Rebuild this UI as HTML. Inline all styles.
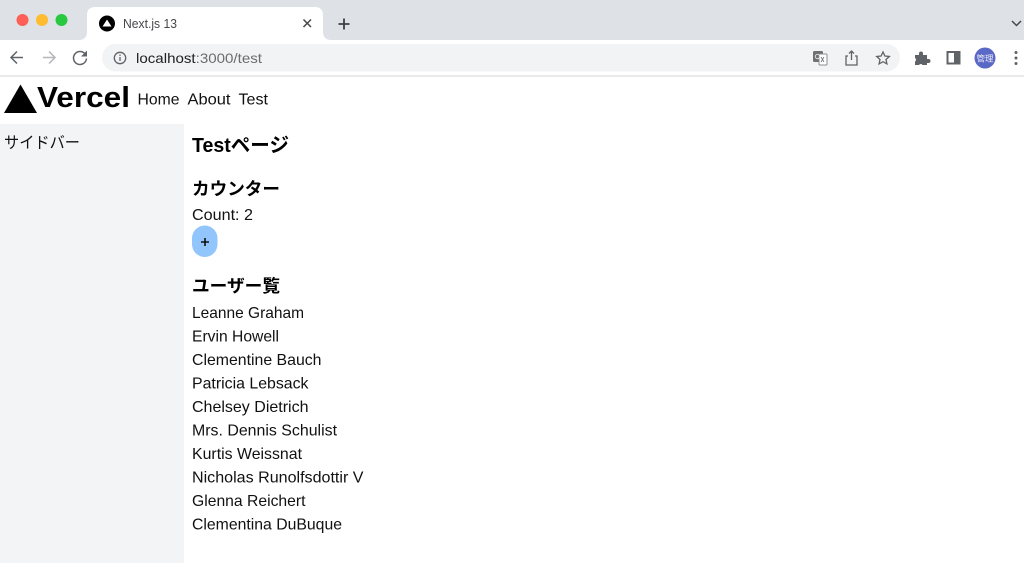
<!DOCTYPE html>
<html lang="ja">
<head>
<meta charset="utf-8">
<title>Next.js 13</title>
<style>
html,body{margin:0;padding:0;background:#fff;}
body{width:1024px;height:563px;overflow:hidden;}
svg{display:block;}
text{font-family:"Liberation Sans","Noto Sans CJK JP",sans-serif;fill:#111;}
.b{font-size:16px;}
.h{font-weight:700;fill:#000;}
</style>
</head>
<body>
<svg width="1024" height="563" viewBox="0 0 1024 563" xmlns="http://www.w3.org/2000/svg">
<!-- browser chrome -->
<rect width="1024" height="40" fill="#dee1e6"/>
<rect y="40" width="1024" height="36" fill="#fff"/>
<rect y="75" width="1024" height="2" fill="#e9eaec"/>
<circle cx="22.500" cy="20" r="6" fill="#fe5f57"/>
<circle cx="42" cy="20" r="6" fill="#febc2e"/>
<circle cx="61.500" cy="20" r="6" fill="#28c840"/>
<!-- tab -->
<path d="M79 40c5 0 8-3 8-8V15c0-5 3-8 8-8h220c5 0 8 3 8 8v17c0 5 3 8 8 8z" fill="#fff"/>
<circle cx="107" cy="23.500" r="8" fill="#000"/>
<path d="M107 19.500l4.500 7h-9z" fill="#fff"/>
<text x="123" y="28" font-size="13" style="fill:#45474a" textLength="54" lengthAdjust="spacingAndGlyphs">Next.js 13</text>
<path d="M303.500 19.500l7.500 7.500M311 19.500l-7.500 7.500" stroke="#45474a" stroke-width="1.500" fill="none"/>
<path d="M344 18.500v11M338.500 24h11" stroke="#3c4043" stroke-width="1.800" fill="none"/>
<path d="M1012 21l4.500 4.500 4.500-4.500" stroke="#45474a" stroke-width="1.500" fill="none"/>
<!-- nav icons -->
<path d="M23 57.500H11.500M17 51.500l-6 6 6 6" stroke="#5f6368" stroke-width="1.500" fill="none"/>
<path d="M43 57.500h12M49 51.500l6 6-6 6" stroke="#b4b6b9" stroke-width="1.500" fill="none"/>
<path d="M85.500 54.500a6.500 6.500 0 1 0 1 4" stroke="#5f6368" stroke-width="1.500" fill="none"/>
<path d="M87 50.500v6h-6z" fill="#5f6368"/>
<!-- omnibox -->
<rect x="102" y="44" width="798" height="27.500" rx="13.700" fill="#f1f3f4"/>
<circle cx="120" cy="58" r="5.700" fill="none" stroke="#5f6368" stroke-width="1.300"/>
<path d="M120 57v4M120 54.500v1.400" stroke="#5f6368" stroke-width="1.300"/>
<text x="136" y="63" font-size="14" textLength="126" lengthAdjust="spacingAndGlyphs"><tspan style="fill:#202124">localhost</tspan><tspan style="fill:#6a6d71">:3000/test</tspan></text>
<!-- right icons -->
<rect x="813" y="51" width="10" height="11" rx="1.500" fill="#6d7074"/>
<rect x="819" y="54" width="8" height="11" rx="1" fill="#fff" stroke="#8a8d91" stroke-width="1"/>
<path d="M821 57l3 5M824 57l-3 5" stroke="#6d7074" stroke-width=".8"/>
<circle cx="817.500" cy="56.500" r="2.200" fill="none" stroke="#e8e8e8" stroke-width=".9"/>
<path d="M848 56h-2v9h11v-9h-2M851.500 60v-9M849 53.500l2.500-2.500 2.500 2.500" stroke="#5f6368" stroke-width="1.300" fill="none"/>
<path d="M883 52l1.900 4 4.400.5-3.300 3 .9 4.400-3.900-2.200-3.900 2.200.9-4.400-3.300-3 4.400-.5z" stroke="#5f6368" stroke-width="1.300" fill="none"/>
<path d="M915 55h4v-1.500a2 2 0 0 1 4 0V55h4v4h1.500a2 2 0 0 1 0 4H927v2h-4.500a2 2 0 0 0-3.500 0H915v-3.500a2 2 0 0 0 0-3.500z" fill="#5f6368"/>
<rect x="947.500" y="52" width="12" height="11.500" fill="none" stroke="#5f6368" stroke-width="2"/>
<rect x="954" y="52" width="6" height="12" fill="#5f6368"/>
<circle cx="985" cy="58" r="10.500" fill="#5b69c6"/>
<text x="985" y="61.500" font-size="8.500" text-anchor="middle" style="fill:#e8eaf8">管理</text>
<circle cx="1016" cy="52.500" r="1.500" fill="#5f6368"/>
<circle cx="1016" cy="58" r="1.500" fill="#5f6368"/>
<circle cx="1016" cy="63.500" r="1.500" fill="#5f6368"/>

<!-- page -->
<path d="M20.500 84.500L37 113H4z" fill="#000"/>
<text x="37" y="107" font-size="28.500" style="font-weight:700;fill:#000" textLength="93" lengthAdjust="spacingAndGlyphs">Vercel</text>
<text class="b" x="137.500" y="104.500" textLength="42" lengthAdjust="spacingAndGlyphs">Home</text>
<text class="b" x="187.500" y="104.500" textLength="43" lengthAdjust="spacingAndGlyphs">About</text>
<text class="b" x="238.500" y="104.500" textLength="29.500" lengthAdjust="spacingAndGlyphs">Test</text>

<rect x="0" y="124" width="184" height="439" fill="#f3f4f6"/>
<text class="b" x="4" y="148" textLength="76" lengthAdjust="spacingAndGlyphs">サイドバー</text>

<text class="h" x="192" y="152" font-size="20" textLength="97" lengthAdjust="spacingAndGlyphs">Testページ</text>
<text class="h" x="192" y="195" font-size="17.500" textLength="88" lengthAdjust="spacingAndGlyphs">カウンター</text>
<text class="b" x="192" y="220" textLength="61" lengthAdjust="spacingAndGlyphs">Count: 2</text>
<rect x="192" y="225.500" width="25.500" height="31.500" rx="12.750" ry="12.750" fill="#93c5fd"/>
<path d="M205 238v8M201 242h8" stroke="#111" stroke-width="1.600" fill="none"/>
<text class="h" x="192" y="292" font-size="17.500" textLength="88" lengthAdjust="spacingAndGlyphs">ユーザー覧</text>

<text class="b" x="192" y="318" textLength="112" lengthAdjust="spacingAndGlyphs">Leanne Graham</text>
<text class="b" x="192" y="341.500" textLength="87" lengthAdjust="spacingAndGlyphs">Ervin Howell</text>
<text class="b" x="192" y="365" textLength="129.500" lengthAdjust="spacingAndGlyphs">Clementine Bauch</text>
<text class="b" x="192" y="388.500" textLength="116.500" lengthAdjust="spacingAndGlyphs">Patricia Lebsack</text>
<text class="b" x="192" y="412" textLength="116.500" lengthAdjust="spacingAndGlyphs">Chelsey Dietrich</text>
<text class="b" x="192" y="435.500" textLength="145" lengthAdjust="spacingAndGlyphs">Mrs. Dennis Schulist</text>
<text class="b" x="192" y="459" textLength="110" lengthAdjust="spacingAndGlyphs">Kurtis Weissnat</text>
<text class="b" x="192" y="482.500" textLength="171.500" lengthAdjust="spacingAndGlyphs">Nicholas Runolfsdottir V</text>
<text class="b" x="192" y="506" textLength="113.500" lengthAdjust="spacingAndGlyphs">Glenna Reichert</text>
<text class="b" x="192" y="529.500" textLength="150" lengthAdjust="spacingAndGlyphs">Clementina DuBuque</text>
</svg>
</body>
</html>
